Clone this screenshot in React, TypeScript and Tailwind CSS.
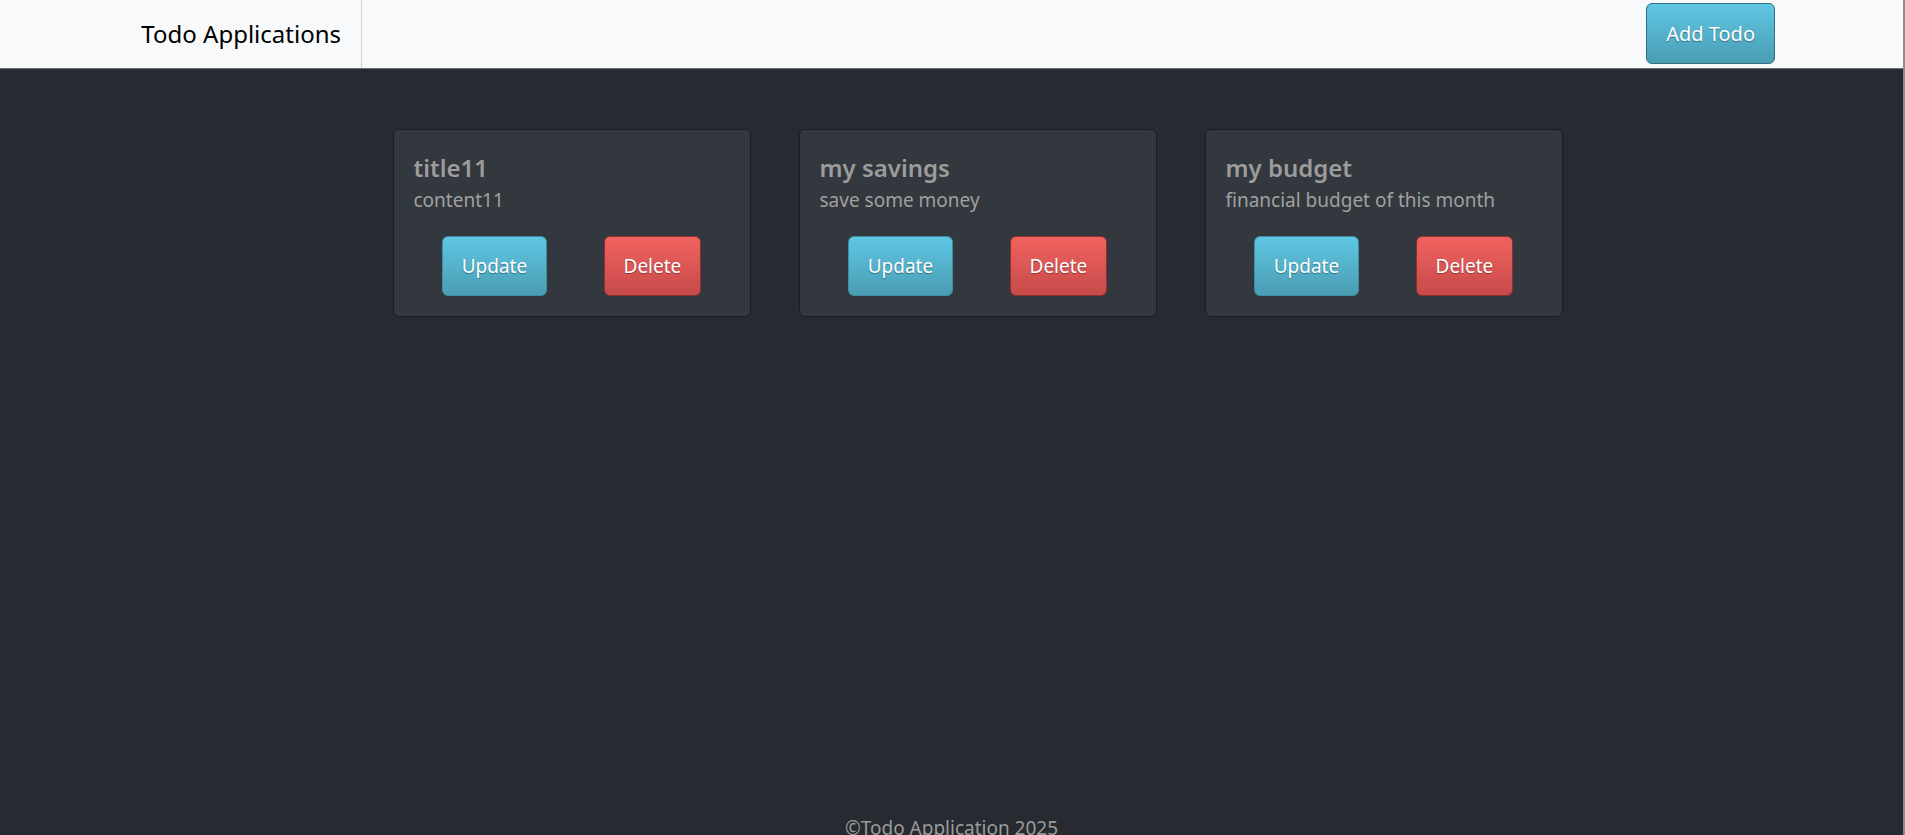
import React from "react";

type Todo = {
  id: number;
  title: string;
  content: string;
};

const todos: Todo[] = [
  { id: 1, title: "title11", content: "content11" },
  { id: 2, title: "my savings", content: "save some money" },
  { id: 3, title: "my budget", content: "financial budget of this month" },
];

const font = { fontFamily: '"Noto Sans", "Open Sans", sans-serif' };

const Header = () => {
  return (
    <header className="flex h-[69px] items-stretch border-b border-[#6b6e73] bg-[#f8f9fa]">
      <div className="flex w-[362px] items-center justify-end border-r border-[#cfd2d5] pr-[20px]">
        <span className="text-[24px] text-black">Todo Applications</span>
      </div>
      <div className="flex flex-1 items-start justify-end pr-[128px] pt-[3px]">
        <button className="h-[61px] rounded-md border border-[#2f6f80] bg-gradient-to-b from-[#5fc7e4] to-[#4a9db3] px-[19px] text-[20px] text-white [text-shadow:0_1px_1px_rgba(0,0,0,0.35)]">
          Add Todo
        </button>
      </div>
    </header>
  );
};

const TodoCard = (props: Todo) => {
  return (
    <div className="flex h-[188px] w-[358px] flex-col rounded-md border border-[#1b1d21] bg-[#33373e] px-5 pb-5 pt-[22px]">
      <h2 className="text-[24px] font-semibold leading-[1.3] text-[#9c9c9c]">
        {props.title}
      </h2>
      <p className="mt-[3px] text-[19px] leading-[1.5] text-[#a0a0a0]">
        {props.content}
      </p>
      <div className="mt-auto flex justify-around">
        <button className="h-[60px] rounded-md border border-[#3f8ea3] bg-gradient-to-b from-[#5fc7e4] to-[#4a9db3] px-[19px] text-[19px] text-white [text-shadow:0_1px_1px_rgba(0,0,0,0.35)]">
          Update
        </button>
        <button className="h-[60px] rounded-md border border-[#8f2f2f] bg-gradient-to-b from-[#f1635f] to-[#c64a4a] px-[19px] text-[19px] text-white [text-shadow:0_1px_1px_rgba(0,0,0,0.35)]">
          Delete
        </button>
      </div>
    </div>
  );
};

export default function App() {
  return (
    <div
      className="h-[835px] overflow-hidden border-r-2 border-[#8a8d91] bg-[#272a30]"
      style={font}
    >
      <Header />
      <main className="h-[745px] pt-[60px]">
        <div className="flex justify-center gap-[48px] pl-[52px]">
          {todos.map((todo) => (
            <TodoCard key={todo.id} {...todo} />
          ))}
        </div>
      </main>
      <footer className="text-center text-[19px] leading-[1.5] text-[#9a9a9a]">
        ©Todo Application 2025
      </footer>
    </div>
  );
}
